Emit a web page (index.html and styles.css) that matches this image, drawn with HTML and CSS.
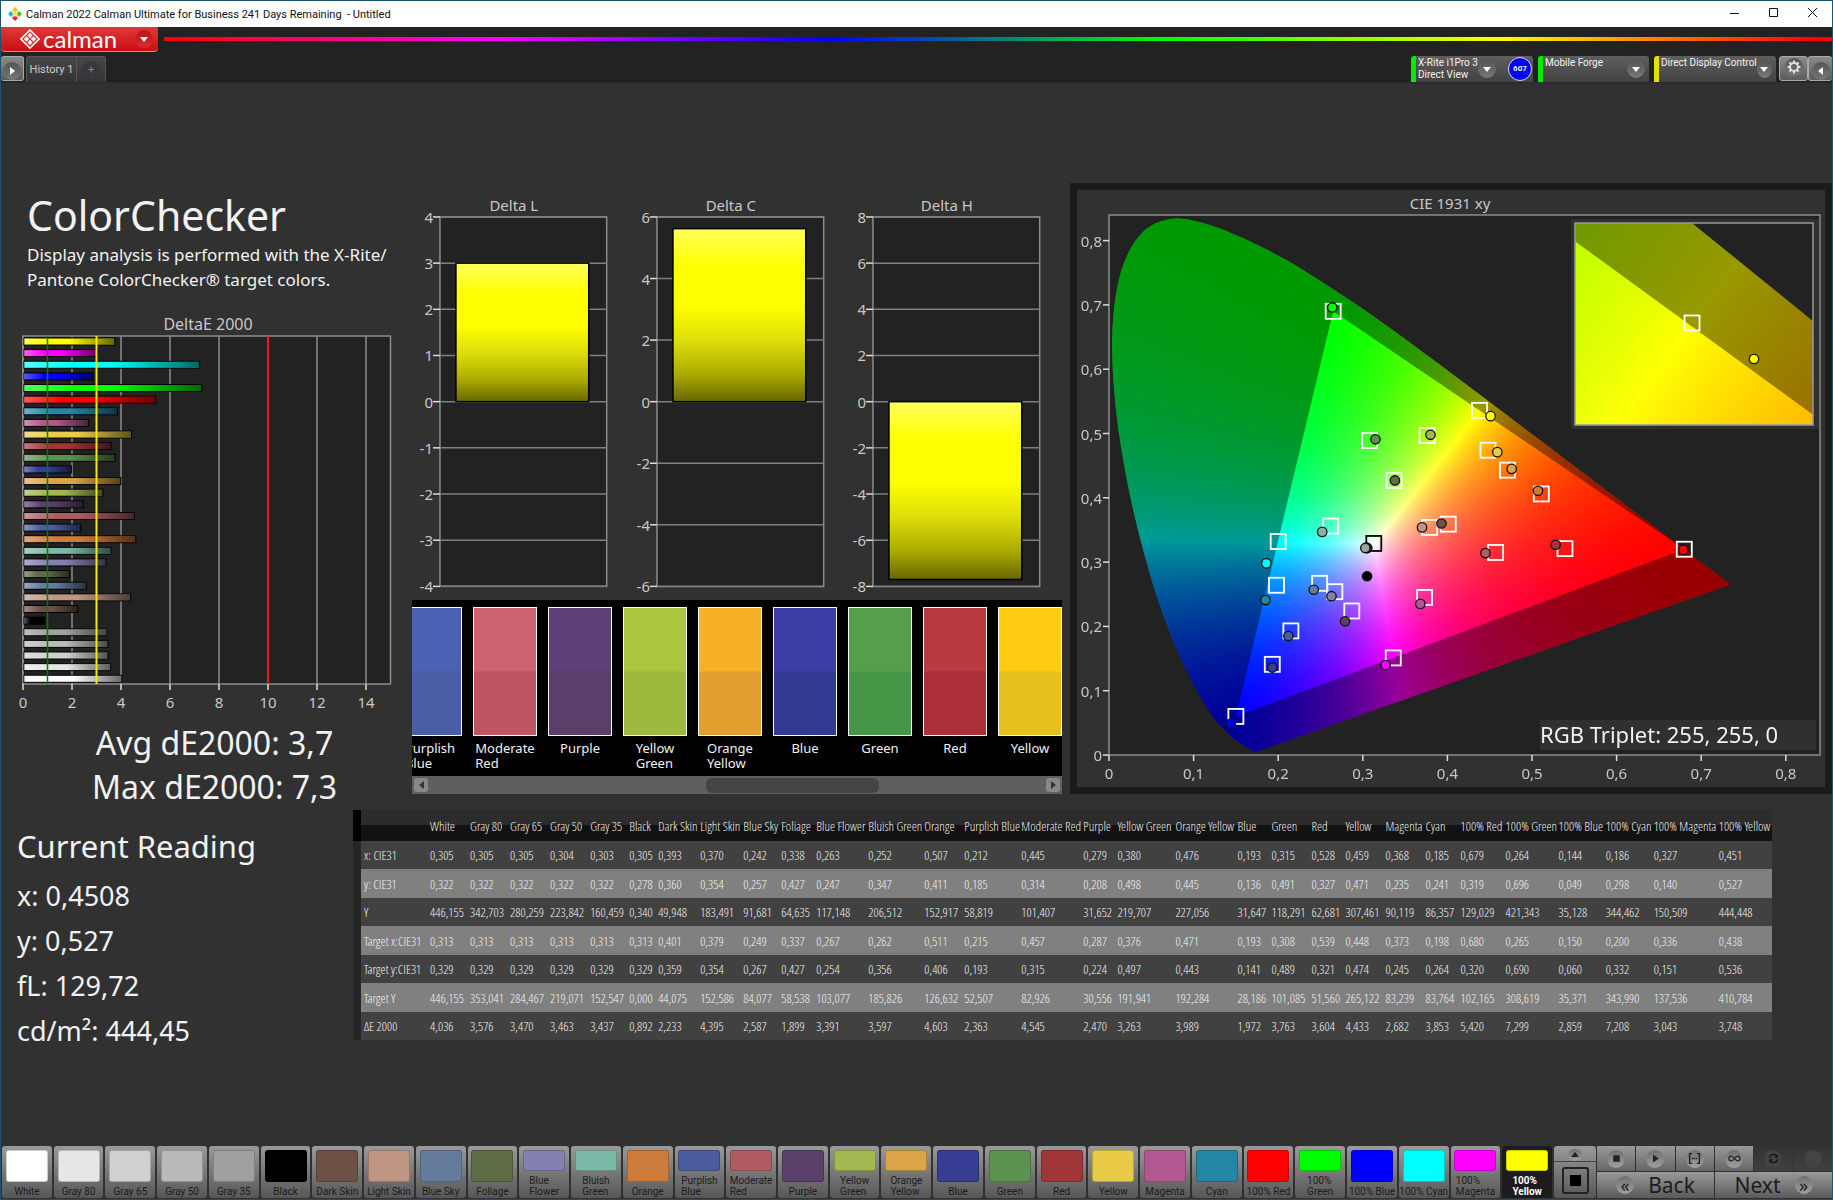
FILE: index.html
```html
<!DOCTYPE html>
<html lang="en">
<head>
    <meta charset="UTF-8">
    <meta name="viewport" content="width=device-width, initial-scale=1.0">
    <title>Calman 2022 - Untitled</title>
    <link rel="stylesheet" href="styles.css">
</head>
<body>

    <div class="titlebar">
        <svg class="app-icon" viewBox="0 0 14 14">
            <path d="M7 0l3 3-3 3-3-3z" fill="#f7c600"/>
            <path d="M3 4l3 3-3 3-3-3z" fill="#19b5e8"/>
            <path d="M11 4l3 3-3 3-3-3z" fill="#3ec53a"/>
            <path d="M7 8l3 3-3 3-3-3z" fill="#e8264c"/>
            <path d="M7 4l3 3-3 3-3-3z" fill="#f9e26a"/>
        </svg>
        <span class="window-title">Calman 2022 Calman Ultimate for Business 241 Days Remaining&nbsp; - Untitled</span>
        <button class="win-btn" aria-label="Minimize"><svg viewBox="0 0 12 12"><path d="M1 6.5h9"/></svg></button>
        <button class="win-btn" aria-label="Maximize"><svg viewBox="0 0 12 12"><path d="M1.500 1.500h8v8h-8z"/></svg></button>
        <button class="win-btn" aria-label="Close"><svg viewBox="0 0 12 12"><path d="M1 1l9 9M10 1l-9 9"/></svg></button>
    </div>

    <header class="header">
        <div class="brand-row">
            <button class="brand">
                <svg class="brand-icon" viewBox="0 0 20 20">
                    <path d="M10 1l9 9-9 9-9-9z" fill="none" stroke="#fff" stroke-width="1.600"/>
                    <path d="M10 3.800l2.700 2.700-2.700 2.700-2.700-2.700zM6.500 7.300l2.700 2.700-2.700 2.700L3.800 10zM13.500 7.300l2.700 2.700-2.700 2.700-2.700-2.700zM10 10.800l2.700 2.700-2.700 2.700-2.700-2.700z" fill="#fff"/>
                </svg>
                <span class="brand-name">calman</span>
                <span class="round round-red"><span class="arrow-down"></span></span>
            </button>
            <div class="rainbow"></div>
        </div>
        <div class="tab-row">
            <button class="icon-btn icon-btn-left" aria-label="Expand"><span class="round"><span class="arrow-right"></span></span></button>
            <button class="tab tab-history">History 1</button>
            <button class="tab tab-add" aria-label="Add tab"><span class="round round-dark">+</span></button>
            <div class="devices">
                <button class="device device-meter">
                    <span class="device-name">X-Rite i1Pro 3<br>Direct View</span>
                    <span class="round"><span class="arrow-down"></span></span>
                    <span class="meter-badge">607</span>
                </button>
                <button class="device device-source">
                    <span class="device-name">Mobile Forge</span>
                    <span class="round"><span class="arrow-down"></span></span>
                </button>
                <button class="device device-display">
                    <span class="device-name">Direct Display Control</span>
                    <span class="round"><span class="arrow-down"></span></span>
                </button>
                <button class="icon-btn" aria-label="Settings">
                    <span class="round"><svg class="gear" viewBox="0 0 16 16"><circle cx="8" cy="8" r="4"/><path d="M8 1.500v2.500M8 12v2.500M1.500 8H4M12 8h2.500M3.400 3.400l1.800 1.800M10.800 10.800l1.800 1.800M3.400 12.600l1.800-1.800M10.800 5.200l1.800-1.800"/></svg></span>
                </button>
                <button class="icon-btn icon-btn-right" aria-label="Collapse"><span class="round"><span class="arrow-left"></span></span></button>
            </div>
        </div>
    </header>

    <main class="main">
        <div class="charts">
            <section class="summary">
                <h1>ColorChecker</h1>
                <p class="intro">Display analysis is performed with the X-Rite/<br>Pantone ColorChecker® target colors.</p>
                <svg id="de-chart" class="chart" viewBox="0 0 411 403"></svg>
                <div class="totals">
                    <div>Avg dE2000: 3,7</div>
                    <div>Max dE2000: 7,3</div>
                </div>
            </section>

            <section class="deltas">
                <div class="delta-charts" id="delta-charts"></div>
                <div class="strip" id="strip"></div>
                <div class="scrollbar">
                    <button class="scroll-btn" aria-label="Scroll left"><span class="arrow-left"></span></button>
                    <div class="scroll-track"><div class="scroll-thumb"></div></div>
                    <button class="scroll-btn" aria-label="Scroll right"><span class="arrow-right"></span></button>
                </div>
            </section>

            <section class="cie">
                <svg id="cie-chart" class="chart" viewBox="0 0 748 597"></svg>
            </section>
        </div>

        <div class="results">
            <section class="reading">
                <h2>Current Reading</h2>
                <div>x: 0,4508</div>
                <div>y: 0,527</div>
                <div>fL: 129,72</div>
                <div>cd/m²: 444,45</div>
            </section>
            <table class="data" id="data"></table>
        </div>
    </main>

    <footer class="toolbar">
        <div class="patches" id="patches"></div>
        <div class="pattern">
            <button class="pattern-up" aria-label="Show more"><span class="round"><span class="arrow-up"></span></span></button>
            <button class="pattern-window" aria-label="Pattern window"><span class="pattern-frame"></span></button>
        </div>
        <div class="controls">
            <div class="control-row">
                <button class="ctl" aria-label="Stop"><span class="round"><svg viewBox="0 0 16 16"><path d="M4 4h8v8H4z" fill="#222"/></svg></span></button>
                <button class="ctl" aria-label="Play"><span class="round"><svg viewBox="0 0 16 16"><path d="M5 3l7 5-7 5z" fill="#222"/></svg></span></button>
                <button class="ctl" aria-label="Read series"><span class="round"><svg viewBox="0 0 16 16"><path d="M5 2H2v12h3M11 2h3v12h-3M4.500 8h2M7.200 8h1.600M9.500 8h2" fill="none" stroke="#222" stroke-width="1.800"/></svg></span></button>
                <button class="ctl" aria-label="Continuous"><span class="round"><svg viewBox="0 0 16 16"><path d="M8 8c-1.500-2-2.500-2.800-4-2.800a2.800 2.800 0 0 0 0 5.600c1.500 0 2.500-.8 4-2.800s2.500-2.800 4-2.800a2.800 2.800 0 0 1 0 5.600c-1.500 0-2.500-.8-4-2.800z" fill="none" stroke="#222" stroke-width="1.500"/></svg></span></button>
                <button class="ctl ctl-off" aria-label="Repeat"><span class="round"><svg viewBox="0 0 16 16"><path d="M3 7a5 5 0 0 1 9-2M13 9a5 5 0 0 1-9 2" fill="none" stroke="#1a1a1a" stroke-width="2"/><path d="M13.500 2v5h-5zM2.500 14V9h5z" fill="#1a1a1a"/></svg></span></button>
                <button class="ctl ctl-off" aria-label="Record"><span class="round"></span></button>
            </div>
            <div class="control-row">
                <button class="nav"><span class="round chevrons">«</span>Back</button>
                <button class="nav">Next<span class="round chevrons">»</span></button>
            </div>
        </div>
    </footer>

    <script src="script.js"></script>
</body>
</html>
```
FILE: styles.css
```css
* {
    box-sizing: border-box;
}
body {
    display: flex;
    flex-direction: column;
    min-height: 100vh;
    margin: 0;
    background-color: #313131;
    border: 1px solid #1b5470;
    color: #f2f2f2;
    font-family: "Noto Sans", "Open Sans", sans-serif;
}
button {
    margin: 0;
    padding: 0;
    border: 0;
    background: none;
    color: inherit;
    font: inherit;
    cursor: pointer;
}
h1, h2, p {
    margin: 0;
    font-weight: normal;
}

/* window title */
.titlebar {
    display: flex;
    align-items: center;
    height: 26px;
    padding-left: 7px;
    background-color: #fff;
    color: #111;
    font-family: Roboto, sans-serif;
    font-size: 11px;
}
.app-icon {
    width: 14px;
    height: 14px;
    margin-right: 4px;
}
.window-title {
    flex: 1;
}
.win-btn {
    width: 39px;
    height: 26px;
}
.win-btn svg {
    width: 12px;
    height: 12px;
    fill: none;
    stroke: #111;
}

/* brand and tabs */
.header {
    background-color: #222;
    border-bottom: 1px solid #2a2a2a;
}
.brand-row {
    display: flex;
    height: 25px;
}
.brand {
    display: flex;
    align-items: center;
    width: 157px;
    padding-left: 19px;
    border-radius: 0 0 4px 4px;
    background: linear-gradient(#e0393b, #c90f12);
    border-bottom: 1px solid #e88;
    color: #fff;
}
.brand-icon {
    width: 20px;
    height: 20px;
}
.brand-name {
    flex: 1;
    padding-left: 3px;
    font-family: Lato, sans-serif;
    font-size: 24px;
    line-height: 20px;
    text-align: left;
}
.rainbow {
    flex: 1;
    height: 4px;
    margin: 10px 0 0 6px;
    background: linear-gradient(90deg, #f00, #f0f 20%, #00f 40%, #0f0 60%, #ff0 80%, #f00 99%);
}
.round {
    display: inline-flex;
    align-items: center;
    justify-content: center;
    width: 18px;
    height: 18px;
    border-radius: 50%;
    background: linear-gradient(#555, #777);
}
.round-red {
    margin-right: 5px;
    background: linear-gradient(#b81a1c, #d92a2c);
}
.round-dark {
    background: #383838;
    color: #888;
}
.arrow-down, .arrow-up, .arrow-left, .arrow-right {
    width: 0;
    height: 0;
    border: 4px solid transparent;
}
.arrow-down {
    border-top: 5px solid #fff;
    border-bottom: 0;
}
.arrow-up {
    border-bottom: 5px solid #222;
    border-top: 0;
}
.arrow-left {
    border-right: 5px solid #fff;
    border-left: 0;
}
.arrow-right {
    border-left: 5px solid #fff;
    border-right: 0;
}
.tab-row {
    display: flex;
    height: 30px;
    padding-top: 4px;
}
.icon-btn {
    width: 29px;
    height: 25px;
    border: 1px solid #aaa;
    border-radius: 3px;
    background: linear-gradient(#8a8a8a, #5c5c5c);
}
.icon-btn-left {
    width: 23px;
    border-left: 0;
    margin-right: 2px;
}
.icon-btn-right {
    width: 24px;
    border-right: 0;
}
.tab {
    height: 26px;
    border: 1px solid #555;
    border-bottom: 0;
    background: linear-gradient(#484848, #333);
    color: #ccc;
    font-family: Roboto, sans-serif;
    font-size: 11px;
}
.tab-history {
    width: 51px;
    border-radius: 3px 0 0 0;
}
.tab-add {
    width: 29px;
    border-left: 0;
    border-radius: 0 3px 0 0;
}
.devices {
    display: flex;
    margin-left: auto;
}
.device {
    display: flex;
    align-items: center;
    width: 122px;
    height: 26px;
    margin-right: 5px;
    padding-right: 4px;
    border-left: 5px solid #0e0;
    border-radius: 3px 3px 0 0;
    background: linear-gradient(#5e5e5e, #424242);
    color: #f2f2f2;
    font-family: Roboto, sans-serif;
    font-size: 10px;
    line-height: 12px;
    text-align: left;
}
.device-source {
    width: 111px;
}
.device-display {
    margin-right: 3px;
    border-left-color: #e6e000;
}
.device-name {
    flex: 1;
    align-self: flex-start;
    padding: 1px 0 0 2px;
    white-space: nowrap;
}
.meter-badge {
    width: 24px;
    height: 24px;
    margin-left: 12px;
    border: 1px solid #ddd;
    border-radius: 50%;
    background-color: #00f;
    font-size: 8px;
    font-weight: bold;
    line-height: 22px;
    text-align: center;
}
.device-meter {
    padding-right: 1px;
}
.gear {
    width: 16px;
    height: 16px;
    fill: none;
    stroke: #ddd;
    stroke-width: 2;
}

/* charts */
.main {
    flex: 1;
    padding-top: 100px;
}
.charts {
    display: grid;
    grid-template-columns: minmax(0, 411fr) minmax(0, 650fr) minmax(0, 770fr);
    align-items: start;
}
.summary {
    padding-top: 5px;
}
h1 {
    padding-left: 26px;
    font-size: 41px;
    line-height: 54px;
}
.intro {
    padding-left: 26px;
    margin-bottom: 20px;
    font-size: 17px;
    line-height: 25px;
    white-space: nowrap;
}
.chart {
    display: block;
    width: 100%;
}
.chart text {
    fill: #c8c8c8;
    font-size: 15px;
}
.chart .de-title {
    font-size: 16px;
}
.chart .triplet {
    fill: #f2f2f2;
    font-size: 22px;
}
.totals {
    padding: 6px 0 0 16px;
    font-size: 32px;
    line-height: 44px;
    text-align: center;
}
.deltas {
    padding-top: 8px;
}
.delta-charts {
    display: grid;
    grid-template-columns: repeat(3, 1fr);
}
.strip {
    display: flex;
    justify-content: flex-end;
    overflow: hidden;
    height: 176px;
    margin-top: 2px;
    padding-top: 7px;
    background-color: #000;
}
.strip-item {
    flex: 0 0 75px;
    padding-left: 11px;
    font-size: 13px;
    line-height: 15px;
    text-align: center;
}
.strip-item svg {
    display: block;
    width: 100%;
    height: 129px;
    margin-bottom: 5px;
    border: 1px solid #fff;
}
.label {
    display: inline-block;
    text-align: left;
}
.scrollbar {
    display: flex;
    align-items: center;
    height: 18px;
    padding: 0 2px;
    background-color: #5f5f5f;
}
.scroll-btn {
    display: flex;
    align-items: center;
    justify-content: center;
    width: 14px;
    height: 14px;
    border-radius: 3px;
    background-color: #888;
}
.scroll-btn .arrow-left {
    border-right-color: #333;
}
.scroll-btn .arrow-right {
    border-left-color: #333;
}
.scroll-track {
    flex: 1;
}
.scroll-thumb {
    width: 28%;
    height: 15px;
    margin-left: 45%;
    border-radius: 6px;
    background-color: #444;
}
.cie {
    margin-left: 8px;
    border: 7px solid #1b1b1b;
}

/* numbers */
.results {
    display: grid;
    grid-template-columns: 352fr minmax(0, 1419fr) 60fr;
    align-items: start;
}
.reading {
    padding: 15px 0 0 16px;
    font-size: 27px;
    line-height: 45px;
}
h2 {
    margin-bottom: 4px;
    font-size: 31px;
}
.data {
    width: 100%;
    margin-top: 1px;
    table-layout: fixed;
    border-collapse: separate;
    border-spacing: 0;
    font-family: "Open Sans Condensed Light", "Liberation Sans Narrow", "Noto Sans", sans-serif;
    font-size: 13px;
}
.data th, .data td {
    height: 28px;
    padding: 0;
    font-weight: normal;
    text-align: left;
    white-space: nowrap;
}
.data thead th {
    height: 31px;
    background: linear-gradient(#2c2c2c 50%, #121212 50%);
}
.data tbody tr {
    background-color: #414141;
}
.data tbody tr:nth-child(even) {
    background-color: #808080;
}
.data tbody tr:nth-child(even) td {
    height: 29px;
}
.data tbody th {
    padding-left: 3px;
    border-left: 8px solid #262626;
}
.data thead th:first-child {
    border-left: 8px solid #000;
}

/* bottom toolbar */
.toolbar {
    display: flex;
    height: 53px;
    padding: 0 0 1px 1px;
    color: #1c1c1c;
}
.patches {
    display: flex;
    flex: 1;
    min-width: 0;
}
.patch {
    display: flex;
    flex: 1;
    flex-direction: column;
    align-items: center;
    min-width: 0;
    margin-right: 2px;
    padding: 4px 0 1px;
    border-radius: 3px;
    background: linear-gradient(#9a9a9a, #575757);
    font-family: Roboto, sans-serif;
    font-size: 10px;
    line-height: 11px;
    white-space: nowrap;
}
.patch-color {
    flex: 1;
    width: 42px;
    margin-bottom: 4px;
    border: 1px solid #0003;
    border-radius: 3px;
}
.patch-active {
    background: #1c1c1c;
    color: #fff;
    font-weight: bold;
}
.toolbar .round {
    background: linear-gradient(#707070, #a0a0a0);
}
.pattern {
    display: flex;
    flex: none;
    flex-direction: column;
    width: 42px;
    margin-right: 1px;
    border-radius: 3px;
    background: linear-gradient(#9a9a9a, #575757);
}
.pattern-up {
    height: 16px;
    border-bottom: 1px solid #444;
    line-height: 10px;
}
.pattern-up .round {
    width: 14px;
    height: 12px;
}
.pattern-window {
    flex: 1;
    display: flex;
    align-items: center;
    justify-content: center;
}
.pattern-frame {
    width: 27px;
    height: 27px;
    border: 2px solid #222;
    border-radius: 3px;
    background: #000 content-box;
    padding: 6px;
}
.controls {
    flex: none;
    width: 235px;
}
.control-row {
    display: flex;
    gap: 1px;
    margin-bottom: 1px;
}
.ctl {
    flex: 1;
    height: 25px;
    background: linear-gradient(#9a9a9a, #666);
    line-height: 10px;
}
.ctl svg {
    width: 13px;
    height: 13px;
}
.toolbar .ctl-off {
    background: linear-gradient(#333, #404040);
}
.toolbar .ctl-off .round {
    background: #444;
}
.nav {
    display: flex;
    flex: 1;
    align-items: center;
    justify-content: center;
    gap: 14px;
    height: 26px;
    background: linear-gradient(#9a9a9a, #5a5a5a);
    font-size: 21px;
    line-height: 24px;
}
.chevrons {
    font-size: 18px;
    line-height: 14px;
}
```
FILE: script.js
```js
const rowNames = ['x: CIE31', 'y: CIE31', 'Y', 'Target x:CIE31', 'Target y:CIE31', 'Target Y', 'ΔE 2000'];

// name, colour, column width, x, y, Y, target x, target y, target Y, dE
const patches = [
    ['White', '#ffffff', 40, '0,305', '0,322', '446,155', '0,313', '0,329', '446,155', '4,036'],
    ['Gray 80', '#e6e6e6', 40, '0,305', '0,322', '342,703', '0,313', '0,329', '353,041', '3,576'],
    ['Gray 65', '#d0d0d0', 40, '0,305', '0,322', '280,259', '0,313', '0,329', '284,467', '3,470'],
    ['Gray 50', '#bababa', 40, '0,304', '0,322', '223,842', '0,313', '0,329', '219,071', '3,463'],
    ['Gray 35', '#a0a0a0', 39, '0,303', '0,322', '160,459', '0,313', '0,329', '152,547', '3,437'],
    ['Black', '#000000', 29, '0,305', '0,278', '0,340', '0,313', '0,329', '0,000', '0,892'],
    ['Dark Skin', '#6e5145', 42, '0,393', '0,360', '49,948', '0,401', '0,359', '44,075', '2,233'],
    ['Light Skin', '#be9683', 43, '0,370', '0,354', '183,491', '0,379', '0,354', '152,586', '4,395'],
    ['Blue Sky', '#647b9b', 38, '0,242', '0,257', '91,681', '0,249', '0,267', '84,077', '2,587'],
    ['Foliage', '#5d6d46', 35, '0,338', '0,427', '64,635', '0,337', '0,427', '58,538', '1,899'],
    ['Blue Flower', '#8380ae', 52, '0,263', '0,247', '117,148', '0,267', '0,254', '103,077', '3,391'],
    ['Bluish Green', '#7bbaa8', 56, '0,252', '0,347', '206,512', '0,262', '0,356', '185,826', '3,597'],
    ['Orange', '#cd7b3b', 40, '0,507', '0,411', '152,917', '0,511', '0,406', '126,632', '4,603'],
    ['Purplish Blue', '#4c5d9f', 57, '0,212', '0,185', '58,819', '0,215', '0,193', '52,507', '2,363'],
    ['Moderate Red', '#b15b62', 62, '0,445', '0,314', '101,407', '0,457', '0,315', '82,926', '4,545'],
    ['Purple', '#5b4169', 34, '0,279', '0,208', '31,652', '0,287', '0,224', '30,556', '2,470'],
    ['Yellow Green', '#a1b950', 58, '0,380', '0,498', '219,707', '0,376', '0,497', '191,941', '3,263'],
    ['Orange Yellow', '#dda347', 62, '0,476', '0,445', '227,056', '0,471', '0,443', '192,284', '3,989'],
    ['Blue', '#363d92', 34, '0,193', '0,136', '31,647', '0,193', '0,141', '28,186', '1,972'],
    ['Green', '#5c924f', 40, '0,315', '0,491', '118,291', '0,308', '0,489', '101,085', '3,763'],
    ['Red', '#a13639', 34, '0,528', '0,327', '62,681', '0,539', '0,321', '51,560', '3,604'],
    ['Yellow', '#e9cb47', 40, '0,459', '0,471', '307,461', '0,448', '0,474', '265,122', '4,433'],
    ['Magenta', '#b0588f', 40, '0,368', '0,235', '90,119', '0,373', '0,245', '83,239', '2,682'],
    ['Cyan', '#2585a5', 35, '0,185', '0,241', '86,357', '0,198', '0,264', '83,764', '3,853'],
    ['100% Red', '#ff0000', 45, '0,679', '0,319', '129,029', '0,680', '0,320', '102,165', '5,420'],
    ['100% Green', '#00ff00', 53, '0,264', '0,696', '421,343', '0,265', '0,690', '308,619', '7,299'],
    ['100% Blue', '#0000ff', 47, '0,144', '0,049', '35,128', '0,150', '0,060', '35,371', '2,859'],
    ['100% Cyan', '#00ffff', 48, '0,186', '0,298', '344,462', '0,200', '0,332', '343,990', '7,208'],
    ['100% Magenta', '#ff00ff', 65, '0,327', '0,140', '150,509', '0,336', '0,151', '137,536', '3,043'],
    ['100% Yellow', '#ffff00', 53, '0,451', '0,527', '444,448', '0,438', '0,536', '410,784', '3,748']
];
const twoLines = ['Blue Flower', 'Bluish Green', 'Purplish Blue', 'Moderate Red', 'Yellow Green',
    'Orange Yellow', '100% Green', '100% Magenta', '100% Yellow'];

const num = s => parseFloat(s.replace(',', '.'));
const label = name => twoLines.includes(name) ? name.replace(' ', '<br>') : name;
const line = (x1, y1, x2, y2, color, w = 1) =>
    `<path d="M${x1} ${y1}L${x2} ${y2}" stroke="${color}" stroke-width="${w}"/>`;
const text = (x, y, s, anchor = 'middle') => `<text x="${x}" y="${y}" text-anchor="${anchor}">${s}</text>`;

// table, column widths as a share of the whole
function drawTable() {
    const first = 77;
    const total = patches.reduce((sum, p) => sum + p[2], first);
    const col = w => `<col style="width:${w / total * 100}%">`;
    let html = '<colgroup>' + col(first);
    patches.forEach(p => html += col(p[2]));
    html += '</colgroup><thead><tr><th></th>';
    patches.forEach(p => html += `<th scope="col">${p[0]}</th>`);
    html += '</tr></thead><tbody>';
    rowNames.forEach((name, i) => {
        html += `<tr><th scope="row">${name}</th>`;
        patches.forEach(p => html += `<td>${p[i + 3]}</td>`);
        html += '</tr>';
    });
    document.getElementById('data').innerHTML = html + '</tbody>';
}

// bottom buttons
function drawPatches() {
    document.getElementById('patches').innerHTML = patches.map(p => `
        <button class="patch${p[0] === '100% Yellow' ? ' patch-active' : ''}">
            <span class="patch-color" style="background-color:${p[1]}"></span>
            <span class="label">${label(p[0])}</span>
        </button>`).join('');
}

// measured colour above, target colour below
function drawStrip() {
    const strip = [
        ['Purplish Blue', '#4b62b3', '#4a5fa5'],
        ['Moderate Red', '#cd636f', '#be5560'],
        ['Purple', '#5f3f77', '#5b3f6a'],
        ['Yellow Green', '#a9c63e', '#9cba3c'],
        ['Orange Yellow', '#f9b029', '#e4a02f'],
        ['Blue', '#3b3da3', '#323c94'],
        ['Green', '#559e4a', '#479546'],
        ['Red', '#b93a3f', '#ac2e38'],
        ['Yellow', '#ffcc12', '#e7c11f']
    ];
    document.getElementById('strip').innerHTML = strip.map(s => `
        <div class="strip-item">
            <svg viewBox="0 0 2 2" preserveAspectRatio="none">
                <rect width="2" height="2" fill="${s[1]}"/><rect y="1" width="2" height="1" fill="${s[2]}"/>
            </svg>
            <span class="label">${label(s[0])}</span>
        </div>`).join('');
}

function drawDeltaE() {
    const x0 = 22, top = 24, bottom = 372, unit = 24.5;
    let s = `<defs><linearGradient id="shade"><stop offset="0" stop-color="#fff" stop-opacity=".35"/>
        <stop offset=".3" stop-color="#fff" stop-opacity="0"/><stop offset=".5" stop-color="#000" stop-opacity="0"/>
        <stop offset="1" stop-color="#000" stop-opacity=".6"/></linearGradient></defs>`;
    s += '<text class="de-title" x="207" y="18" text-anchor="middle">DeltaE 2000</text>';
    s += `<rect x="${x0}" y="${top}" width="${15 * unit}" height="${bottom - top}" fill="#222" stroke="#8c8c8c" stroke-width="1.500"/>`;
    for (let v = 0; v <= 14; v += 2) {
        const x = x0 + v * unit;
        s += line(x, top, x, bottom, '#8c8c8c', 1.5) + line(x, bottom, x, bottom + 6, '#ddd', 1.5);
        s += text(x, 396, v);
    }
    [...patches].reverse().forEach((p, i) => {
        const y = top + 2 + i * 11.63;
        const w = num(p[9]) * unit - 1;
        s += `<rect x="${x0 + 1}" y="${y}" width="${w}" height="7" fill="${p[1]}" stroke="#000"/>`;
        s += `<rect x="${x0 + 1}" y="${y + .5}" width="${w}" height="6" fill="url(#shade)"/>`;
    });
    s += line(x0 + unit, top, x0 + unit, bottom, '#0a7a0a', 1.5);
    s += line(x0 + 3 * unit, top, x0 + 3 * unit, bottom, '#f5e800', 2);
    s += line(x0 + 10 * unit, top, x0 + 10 * unit, bottom, '#f01818', 2);
    document.getElementById('de-chart').innerHTML = s;
}

function deltaChart(title, max, step, value) {
    const left = 28, right = 195, top = 26, mid = 211, bottom = 396;
    const toY = v => mid - v * (mid - top) / max;
    let s = text(102, 20, title);
    s += `<rect x="${left}" y="${top}" width="${right - left}" height="${bottom - top}" fill="#222" stroke="#8c8c8c" stroke-width="1.500"/>`;
    for (let v = -max; v <= max; v += step) {
        s += line(left, toY(v), right, toY(v), '#808080', 1.5) + line(left - 7, toY(v), left, toY(v), '#ddd', 1.5);
        s += text(21, toY(v) + 6, v, 'end');
    }
    const y = toY(Math.max(value, 0));
    s += `<rect x="44" y="${y}" width="133" height="${Math.abs(toY(value) - mid)}" fill="url(#bar)" stroke="#000" stroke-width="1.500"/>`;
    return `<svg class="chart" viewBox="0 0 217 408"><defs><linearGradient id="bar" x2="0" y2="1">
        <stop offset="0" stop-color="#ffff5c"/><stop offset=".22" stop-color="#ffff00"/><stop offset=".45" stop-color="#ffff00"/>
        <stop offset=".65" stop-color="#dddd0c"/><stop offset=".85" stop-color="#a8a800"/><stop offset="1" stop-color="#666600"/>
        </linearGradient></defs>${s}</svg>`;
}

// CIE 1931 spectral locus
const locus = [[.1741, .005], [.1714, .0051], [.1644, .0109], [.1566, .0177], [.144, .0297], [.1241, .0578],
    [.1096, .0868], [.0913, .1327], [.0687, .2007], [.0454, .295], [.0235, .4127], [.0082, .5384], [.0039, .6548],
    [.0139, .7502], [.0389, .812], [.0743, .8338], [.1142, .8262], [.1547, .8059], [.1929, .7816], [.2296, .7543],
    [.3016, .6923], [.3731, .6245], [.4441, .5547], [.5125, .4866], [.5752, .4242], [.627, .3725], [.6658, .334],
    [.6915, .3083], [.719, .2809], [.7347, .2653]];
const gamut = [[.68, .32], [.265, .69], [.15, .06]];
const white = [.3127, .329];

function smooth(points) {
    const out = [];
    for (let i = 0; i < points.length - 1; i++) {
        const a = points[Math.max(i - 1, 0)], b = points[i], c = points[i + 1], d = points[Math.min(i + 2, points.length - 1)];
        for (let t = 0; t < 1; t += .125) {
            out.push([0, 1].map(k => .5 * (2 * b[k] + (c[k] - a[k]) * t + (2 * a[k] - 5 * b[k] + 4 * c[k] - d[k]) * t * t
                + (3 * b[k] - a[k] - 3 * c[k] + d[k]) * t * t * t)));
        }
    }
    out.push(points[points.length - 1]);
    return out;
}

function paintGamut(canvas, x0, x1, y0, y1) {
    const w = canvas.width, h = canvas.height;
    const xyz = p => [p[0], p[1], 1 - p[0] - p[1]];
    const cross = (a, b) => [a[1] * b[2] - a[2] * b[1], a[2] * b[0] - a[0] * b[2], a[0] * b[1] - a[1] * b[0]];
    const dot = (a, b) => a[0] * b[0] + a[1] * b[1] + a[2] * b[2];
    const planes = gamut.map((p, i) => {
        const n = cross(xyz(gamut[(i + 1) % 3]), xyz(gamut[(i + 2) % 3]));
        const k = dot(n, xyz(white));
        return n.map(v => v / k);
    });

    const fill = document.createElement('canvas');
    fill.width = w;
    fill.height = h;
    const fctx = fill.getContext('2d');
    const img = fctx.createImageData(w, h);
    for (let j = 0; j < h; j++) {
        for (let i = 0; i < w; i++) {
            const c = xyz([x0 + (x1 - x0) * i / w, y1 - (y1 - y0) * j / h]);
            const rgb = planes.map(n => Math.max(dot(n, c), 0));
            const m = Math.max(...rgb);
            rgb.forEach((v, k) => img.data[(j * w + i) * 4 + k] = 255 * Math.pow(v / m, 1.25));
            img.data[(j * w + i) * 4 + 3] = 255;
        }
    }
    fctx.putImageData(img, 0, 0);

    const ctx = canvas.getContext('2d');
    const clipTo = points => {
        ctx.beginPath();
        points.forEach(p => ctx.lineTo((p[0] - x0) / (x1 - x0) * w, (y1 - p[1]) / (y1 - y0) * h));
        ctx.closePath();
        ctx.clip();
    };
    ctx.save();
    clipTo(smooth(locus));
    ctx.drawImage(fill, 0, 0);
    ctx.fillStyle = 'rgba(0, 0, 0, .4)';
    ctx.fillRect(0, 0, w, h);
    ctx.restore();
    clipTo(gamut);
    ctx.drawImage(fill, 0, 0);
}

function drawCie() {
    const left = 32, top = 25, w = 711, h = 540, bottom = top + h;
    const unitX = 846, unitY = 643;
    const toX = x => left + x * unitX, toY = y => bottom - y * unitY;
    const square = (x, y, color) => `<rect x="${x - 7.5}" y="${y - 7.5}" width="15" height="15" fill="none" stroke="${color}" stroke-width="1.800"/>`;
    const circle = (x, y, color) => `<circle cx="${x}" cy="${y}" r="4.700" fill="${color}" stroke="#111" stroke-width="1.300"/>`;
    let s = text(373, 19, 'CIE 1931 xy');
    s += `<rect x="${left}" y="${top}" width="${w}" height="${h}" fill="#222"/>`;
    s += `<foreignObject x="${left}" y="${top}" width="${w}" height="${h}"><canvas id="gamut" width="${w}" height="${h}"></canvas></foreignObject>`;
    s += `<rect x="${left}" y="${top}" width="${w}" height="${h}" fill="none" stroke="#8c8c8c" stroke-width="1.500"/>`;
    for (let i = 0; i <= 8; i++) {
        const v = i ? '0,' + i : '0';
        s += line(toX(i / 10), bottom, toX(i / 10), bottom + 6, '#ddd', 1.5) + text(toX(i / 10), bottom + 24, v);
        s += line(left - 6, toY(i / 10), left, toY(i / 10), '#ddd', 1.5) + text(left - 7, toY(i / 10) + 6, v, 'end');
    }
    patches.forEach((p, i) => {
        if (i < 1 || i > 5) s += square(toX(num(p[6])), toY(num(p[7])), i ? '#fff' : '#000');
    });
    patches.forEach(p => s += circle(toX(num(p[3])), toY(num(p[4])), p[1]));

    // zoomed view around the selected patch
    s += '<rect x="494" y="29" width="248" height="210" fill="#303030"/><rect x="498" y="33" width="238" height="202" fill="#222"/>';
    s += '<foreignObject x="498" y="33" width="238" height="202"><canvas id="gamut-zoom" width="238" height="202"></canvas></foreignObject>';
    s += '<rect x="498" y="33" width="238" height="202" fill="none" stroke="#999" stroke-width="1.500"/>';
    s += square(615, 133, '#fff') + circle(677, 169, '#ffff00');
    s += '<rect x="463" y="530" width="276" height="30" fill="#303030"/><text class="triplet" x="463" y="553">RGB Triplet: 255, 255, 0</text>';
    document.getElementById('cie-chart').innerHTML = s;
    paintGamut(document.getElementById('gamut'), 0, w / unitX, 0, h / unitY);
    paintGamut(document.getElementById('gamut-zoom'), .415, .462, .5119, .5607);
}

drawTable();
drawPatches();
drawStrip();
drawDeltaE();
document.getElementById('delta-charts').innerHTML =
    deltaChart('Delta L', 4, 1, 3) + deltaChart('Delta C', 6, 2, 5.62) + deltaChart('Delta H', 8, 2, -7.7);
drawCie();
```
